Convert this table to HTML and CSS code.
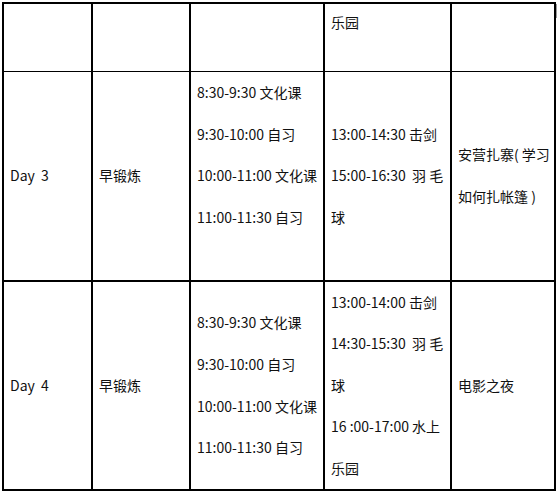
FILE: index.html
```html
<!DOCTYPE html>
<html lang="zh-CN">
<head>
<meta charset="utf-8">
<title>日程表</title>
<link rel="stylesheet" href="styles.css">
</head>
<body>
<div class="page">
  <div class="schedule">
    <div class="cell row-cut"></div>
    <div class="cell row-cut"></div>
    <div class="cell row-cut"></div>
    <div class="cell row-cut top"><p class="first">乐园</p></div>
    <div class="cell row-cut"></div>

    <div class="cell mid"><p>Day&nbsp; 3</p></div>
    <div class="cell mid"><p>早锻炼</p></div>
    <div class="cell top">
      <p>8:30-9:30 文化课</p>
      <p>9:30-10:00 自习</p>
      <p>10:00-11:00 文化课</p>
      <p>11:00-11:30 自习</p>
    </div>
    <div class="cell top">
      <p>&nbsp;</p>
      <p>13:00-14:30 击剑</p>
      <p>15:00-16:30&nbsp; 羽 毛</p>
      <p>球</p>
    </div>
    <div class="cell mid">
      <p>安营扎寨( 学习</p>
      <p>如何扎帐篷 )</p>
    </div>

    <div class="cell mid last"><p>Day&nbsp; 4</p></div>
    <div class="cell mid last"><p>早锻炼</p></div>
    <div class="cell mid last">
      <p>8:30-9:30 文化课</p>
      <p>9:30-10:00 自习</p>
      <p>10:00-11:00 文化课</p>
      <p>11:00-11:30 自习</p>
    </div>
    <div class="cell mid last">
      <p>13:00-14:00 击剑</p>
      <p>14:30-15:30&nbsp; 羽 毛</p>
      <p>球</p>
      <p>16 :00-17:00 水上</p>
      <p>乐园</p>
    </div>
    <div class="cell mid last"><p>电影之夜</p></div>
  </div>
  <div class="marker"></div>
</div>
</body>
</html>
```

FILE: styles.css
```css
html, body {
  margin: 0;
  padding: 0;
  background: #ffffff;
}

body {
  font-family: "Noto Sans CJK SC", "Noto Sans", sans-serif;
  font-size: 14px;
  color: #111111;
}

.page {
  position: relative;
  width: 558px;
  height: 493px;
  overflow: hidden;
}

.schedule {
  display: grid;
  grid-template-columns: 89px 98px 134px 127px 104px;
  grid-template-rows: 68px 210px 209px;
  margin: 2px 0 0 2px;
  width: 552px;
  border-top: 2px solid #000;
  border-left: 2px solid #000;
}

.cell {
  box-sizing: border-box;
  border-right: 2px solid #000;
  border-bottom: 2px solid #000;
  padding: 0 4px 0 6px;
  display: flex;
  flex-direction: column;
  overflow: hidden;
}

.cell.row-cut {
  border-bottom-width: 1px;
}

.cell.mid {
  justify-content: center;
}

.cell.top {
  justify-content: flex-start;
}

.cell p {
  margin: 0;
  line-height: 41.6px;
  white-space: nowrap;
}

.cell p.first {
  margin-top: -2px;
}

.marker {
  position: absolute;
  left: 556px;
  top: 4px;
  width: 1px;
  height: 14px;
  background: #9a9a9a;
}
```
